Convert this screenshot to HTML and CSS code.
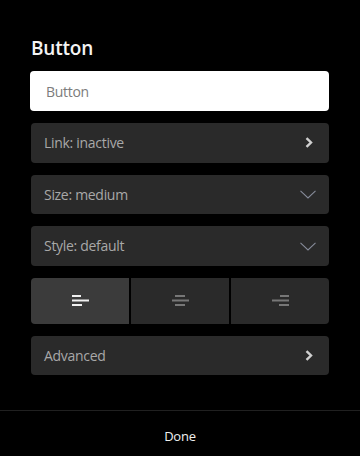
FILE: index.html
```html
<!DOCTYPE html>
<html>
<head>
<meta charset="utf-8">
<link rel="stylesheet" href="styles.css">
</head>
<body>
<div class="panel">
  <h1 class="title">Button</h1>
  <div class="input"><span class="placeholder">Button</span></div>
  <div class="row">
    <span class="label">Link: inactive</span>
    <svg class="chev-right" width="8" height="11" viewBox="0 0 8 11"><path d="M1.5 1.2 L6 5.5 L1.5 9.8" fill="none" stroke="#d0d0d0" stroke-width="2.4" stroke-linejoin="miter"/></svg>
  </div>
  <div class="row">
    <span class="label">Size: medium</span>
    <svg class="chev-down" width="16" height="9" viewBox="0 0 16 9"><path d="M0.5 0.8 L8 8 L15.5 0.8" fill="none" stroke="#868b99" stroke-width="1.1"/></svg>
  </div>
  <div class="row">
    <span class="label">Style: default</span>
    <svg class="chev-down" width="16" height="9" viewBox="0 0 16 9"><path d="M0.5 0.8 L8 8 L15.5 0.8" fill="none" stroke="#868b99" stroke-width="1.1"/></svg>
  </div>
  <div class="align-group">
    <div class="seg active">
      <svg width="17" height="11" viewBox="0 0 17 11"><rect x="0" y="0" width="9" height="2" fill="#f0f0f0"/><rect x="0" y="4.5" width="17" height="2" fill="#f0f0f0"/><rect x="0" y="9" width="10" height="2" fill="#f0f0f0"/></svg>
    </div>
    <div class="seg">
      <svg width="17" height="11" viewBox="0 0 17 11"><rect x="3" y="0" width="10" height="2" fill="#777"/><rect x="0" y="4.5" width="17" height="2" fill="#777"/><rect x="3" y="9" width="10" height="2" fill="#777"/></svg>
    </div>
    <div class="seg">
      <svg width="17" height="11" viewBox="0 0 17 11"><rect x="8" y="0" width="9" height="2" fill="#777"/><rect x="0" y="4.5" width="17" height="2" fill="#777"/><rect x="7" y="9" width="10" height="2" fill="#777"/></svg>
    </div>
  </div>
  <div class="row">
    <span class="label">Advanced</span>
    <svg class="chev-right" width="8" height="11" viewBox="0 0 8 11"><path d="M1.5 1.2 L6 5.5 L1.5 9.8" fill="none" stroke="#d0d0d0" stroke-width="2.4" stroke-linejoin="miter"/></svg>
  </div>
</div>
<div class="footer">Done</div>
</body>
</html>
```

FILE: styles.css
```css
html, body {
  margin: 0;
  padding: 0;
  background: #000;
  height: 456px;
  overflow: hidden;
}
body {
  font-family: "Open Sans", "Noto Sans", sans-serif;
  display: flex;
  flex-direction: column;
}
.panel {
  padding: 36px 31px 0 30px;
  display: flex;
  flex-direction: column;
  gap: 12px;
  height: 410px;
  flex: none;
  box-sizing: border-box;
}
.title {
  margin: 0 0 -1px 1px;
  font-size: 19px;
  font-weight: 600;
  line-height: 24px;
  color: #f4f4f4;
  letter-spacing: -0.2px;
}
.input {
  height: 40px;
  flex: none;
  background: #fff;
  border-radius: 4px;
  display: flex;
  align-items: center;
  padding-left: 16px;
}
.placeholder {
  font-size: 14px;
  color: #7c7c7c;
  letter-spacing: -0.3px;
}
.row {
  height: 39.5px;
  flex: none;
  margin-left: 1px;
  background: #2a2a2a;
  border-radius: 4px;
  display: flex;
  align-items: center;
  justify-content: space-between;
  padding: 0 13px;
}
.label {
  font-size: 14px;
  color: #a8a8a8;
  letter-spacing: -0.3px;
}
.chev-right {
  margin-right: 3px;
}
.chev-down {
  margin-top: 1px;
}
.align-group {
  height: 46px;
  flex: none;
  margin-left: 1px;
  display: grid;
  grid-template-columns: 1fr 1fr 1fr;
  gap: 2px;
  border-radius: 4px;
  overflow: hidden;
}
.seg {
  background: #2a2a2a;
  display: flex;
  align-items: center;
  justify-content: center;
}
.seg.active {
  background: #3b3b3b;
}
.footer {
  border-top: 1px solid #202020;
  height: 46px;
  box-sizing: border-box;
  display: flex;
  align-items: center;
  justify-content: center;
  padding-top: 4px;
  font-size: 13px;
  color: #f0f0f0;
  letter-spacing: -0.2px;
}
```
